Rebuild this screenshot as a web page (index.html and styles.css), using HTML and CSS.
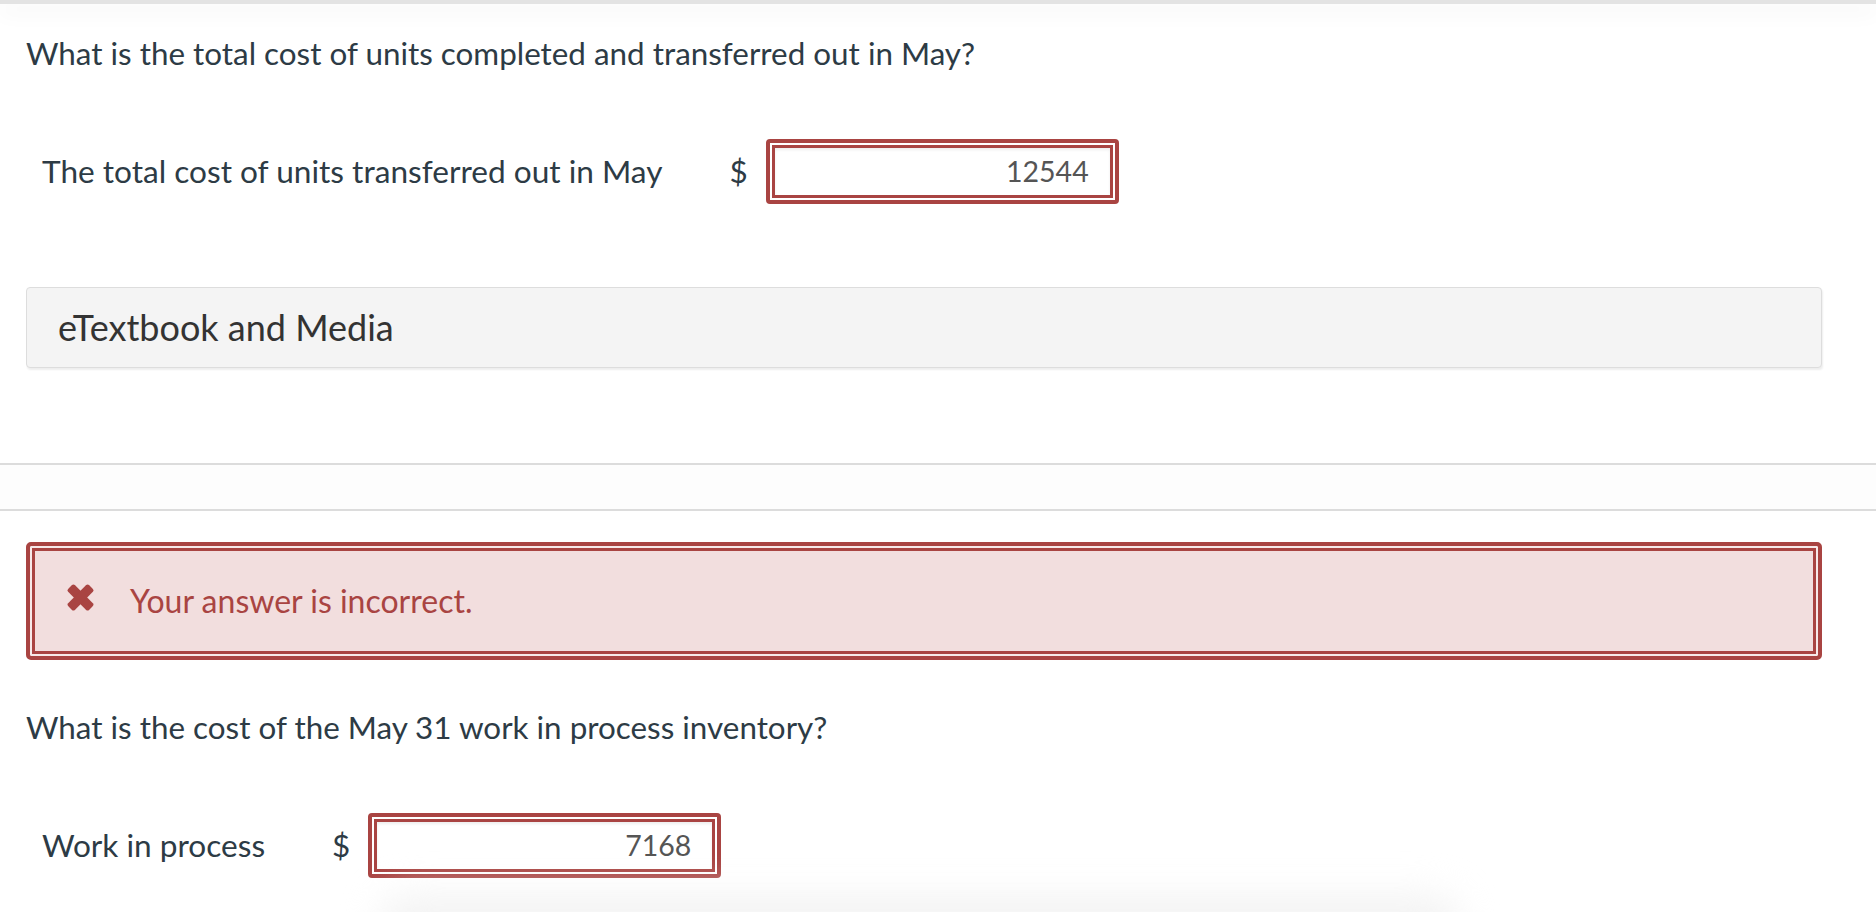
FILE: index.html
```html
<!DOCTYPE html>
<html lang="en">
<head>
<meta charset="utf-8">
<title>Question</title>
<link rel="stylesheet" href="styles.css">
</head>
<body>
<div class="topbar"></div>
<div class="content">
  <p class="question q1">What is the total cost of units completed and transferred out in May?</p>
  <div class="answer-row">
    <span class="label">The total cost of units transferred out in May</span>
    <span class="currency">$</span>
    <div class="input-wrap"><div class="input-inner">12544</div></div>
  </div>
  <div class="panel">eTextbook and Media</div>
</div>
<div class="divider-band"></div>
<div class="content">
  <div class="alert">
    <svg class="alert-icon" width="29" height="29" viewBox="0 0 28 28" aria-hidden="true">
      <g fill="#a94442">
        <rect x="-0.3" y="9.4" width="28.6" height="9.2" rx="2" transform="rotate(45 14 14)"/>
        <rect x="-0.3" y="9.4" width="28.6" height="9.2" rx="2" transform="rotate(-45 14 14)"/>
      </g>
    </svg>
    <span class="alert-text">Your answer is incorrect.</span>
  </div>
  <p class="question q2">What is the cost of the May 31 work in process inventory?</p>
  <div class="answer-row">
    <span class="label">Work in process</span>
    <span class="currency">$</span>
    <div class="input-wrap"><div class="input-inner">7168</div></div>
  </div>
</div>
<div class="bottom-shade"></div>
</body>
</html>
```

FILE: styles.css
```css
html, body {
  margin: 0;
  padding: 0;
  background: #ffffff;
}
body {
  font-family: "Lato", "Liberation Sans", sans-serif;
  color: #2d3b45;
  width: 1876px;
  height: 912px;
  overflow: hidden;
  position: relative;
}
.topbar {
  height: 4px;
  background: #e3e3e3;
  box-shadow: 0 7px 20px rgba(0, 0, 0, 0.1);
}
.content {
  padding: 0 54px 0 26px;
}
.question {
  margin: 0;
  font-size: 31.4px;
  line-height: 38px;
}
.q1 {
  padding-top: 29.6px;
}
.q2 {
  margin-top: 47.6px;
}
.answer-row {
  display: flex;
  align-items: center;
  margin-top: 67.4px;
  padding-left: 16px;
}
.label {
  font-size: 31.6px;
  line-height: 38px;
  margin-right: 67px;
}
.currency {
  font-size: 31.4px;
  line-height: 38px;
  margin-right: 18px;
}
.input-wrap {
  width: 353px;
  height: 65px;
  box-sizing: border-box;
  border: 4px solid #a94442;
  border-radius: 4px;
  padding: 2px;
  background: #ffffff;
}
.input-inner {
  height: 100%;
  box-sizing: border-box;
  border: 3px solid #a94442;
  box-shadow: inset 0 2px 3px rgba(0, 0, 0, 0.07);
  display: flex;
  align-items: center;
  justify-content: flex-end;
  padding-right: 21px;
  font-size: 28.5px;
  color: #555555;
}
.panel {
  margin-top: 83px;
  background: #f4f4f4;
  border: 1px solid #dddddd;
  border-radius: 4px;
  box-shadow: 1px 2px 2px rgba(0, 0, 0, 0.07);
  padding: 17px 31px 18px;
  font-size: 36px;
  line-height: 44px;
  color: #333333;
}
.divider-band {
  margin-top: 95px;
  height: 44px;
  border-top: 2px solid #dcdcdc;
  border-bottom: 2px solid #dcdcdc;
  background: #fdfdfd;
}
.alert {
  margin-top: 31px;
  height: 118px;
  box-sizing: border-box;
  border: 4px solid #a94442;
  border-radius: 5px;
  background: #f2dede;
  box-shadow: inset 0 0 0 2px #f7e9e9, inset 0 0 0 5px #a94442;
  display: flex;
  align-items: center;
  padding-left: 36px;
}
.alert-icon {
  flex: none;
  margin-top: -6px;
  margin-right: 35px;
}
.alert-text {
  font-size: 32px;
  line-height: 38px;
  color: #a94442;
}
.bottom-shade {
  position: absolute;
  left: 380px;
  top: 895px;
  width: 1080px;
  height: 60px;
  border-radius: 30px;
  background: #f3f3f3;
  filter: blur(18px);
}
```
